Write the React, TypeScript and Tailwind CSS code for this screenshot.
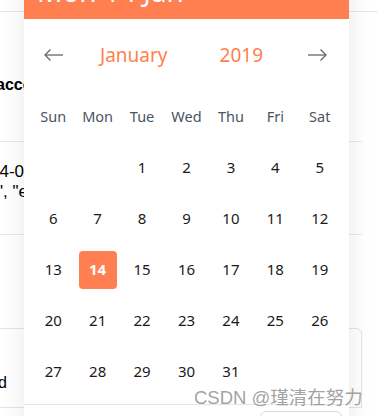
import React from "react";

const weekdays = ["Sun", "Mon", "Tue", "Wed", "Thu", "Fri", "Sat"];

// January 2019 starts on a Tuesday
const cells: (number | null)[] = [null, null, ...Array.from({ length: 31 }, (_, i) => i + 1)];
while (cells.length < 35) cells.push(null);

function Arrow({ dir }: { dir: "left" | "right" }) {
  return (
    <svg width="20" height="12" viewBox="0 0 20 12" fill="none" stroke="#5f6670" strokeWidth="1.3">
      {dir === "left" ? (
        <>
          <path d="M1 6h18" />
          <path d="M6.5 0.5L1 6l5.5 5.5" />
        </>
      ) : (
        <>
          <path d="M1 6h18" />
          <path d="M13.5 0.5L19 6l-5.5 5.5" />
        </>
      )}
    </svg>
  );
}

function Background() {
  return (
    <div className="w-[362px] font-['Liberation_Sans',sans-serif] text-[16px] text-black">
      <div className="h-[12px] w-[378px] border-b border-[#e8e8e8]" />
      <div className="h-[130px] border-b border-[#e8e8e8] pt-[62px] -ml-[4px]">
        <div className="font-bold leading-[22px]">account</div>
        <div className="-ml-[6px] leading-[22px] text-[#1890ff]">o</div>
      </div>
      <div className="h-[93px] border-b border-[#e8e8e8] pt-[20px] -ml-[10px] text-[17px]">
        <div className="leading-[20px]">14-01</div>
        <div className="ml-[7px] leading-[20px]">", "e</div>
      </div>
      <div className="h-[93px]" />
      <div className="h-[80px] -ml-[10px] rounded-tr-md border border-[#e3e3e3] pt-[44px]">
        <div className="-ml-[2px] leading-[20px]">nd</div>
      </div>
    </div>
  );
}

function Picker() {
  return (
    <div className="absolute left-[24px] top-[-50px] w-[325px] bg-white font-['Noto_Sans',sans-serif] shadow-[0_0_24px_rgba(0,0,0,0.09)]">
      <div className="flex h-[69px] items-end bg-[#ff7f50] px-[13px] pb-[13px]">
        <span className="text-[28px] leading-[30px] text-white">Mon 14 Jan</span>
      </div>
      <div className="mt-[16px] flex h-[40px] items-center">
        <div className="ml-[20px]">
          <Arrow dir="left" />
        </div>
        <span className="ml-[36px] text-[19px] text-[#ff7f50]">January</span>
        <span className="ml-[52px] text-[19px] text-[#ff7f50]">2019</span>
        <div className="ml-[44px]">
          <Arrow dir="right" />
        </div>
      </div>
      <div className="mt-[16px] grid grid-cols-7 px-[7px]">
        {weekdays.map((d) => (
          <div key={d} className="flex h-[51px] items-center justify-center text-[14.5px] text-[#4b5563]">
            {d}
          </div>
        ))}
        {cells.map((n, i) => (
          <div key={i} className="flex h-[51px] items-center justify-center">
            {n === 14 ? (
              <span className="flex h-[38px] w-[38px] items-center justify-center rounded-[4px] bg-[#ff7f50] text-[15px] font-bold text-white">
                14
              </span>
            ) : (
              <span className="text-[15px] text-[#1a1a1a]">{n ?? ""}</span>
            )}
          </div>
        ))}
      </div>
      <div className="mt-[7px] h-[40px] border-t border-[#e5e5e5] pt-[6px]">
        <div className="ml-[236px] h-[30px] w-[82px] rounded-[6px] border border-[#dcdcdc]" />
      </div>
    </div>
  );
}

export default function App() {
  return (
    <div className="relative h-[416px] w-[378px] overflow-hidden bg-white">
      <Background />
      <Picker />
      <div className="absolute left-[194px] top-[387px] font-['Liberation_Sans','Noto_Sans_CJK_SC',sans-serif] text-[18.5px] leading-[22px] text-[#8a8a8a]/80">
        CSDN @瑾清在努力
      </div>
    </div>
  );
}
